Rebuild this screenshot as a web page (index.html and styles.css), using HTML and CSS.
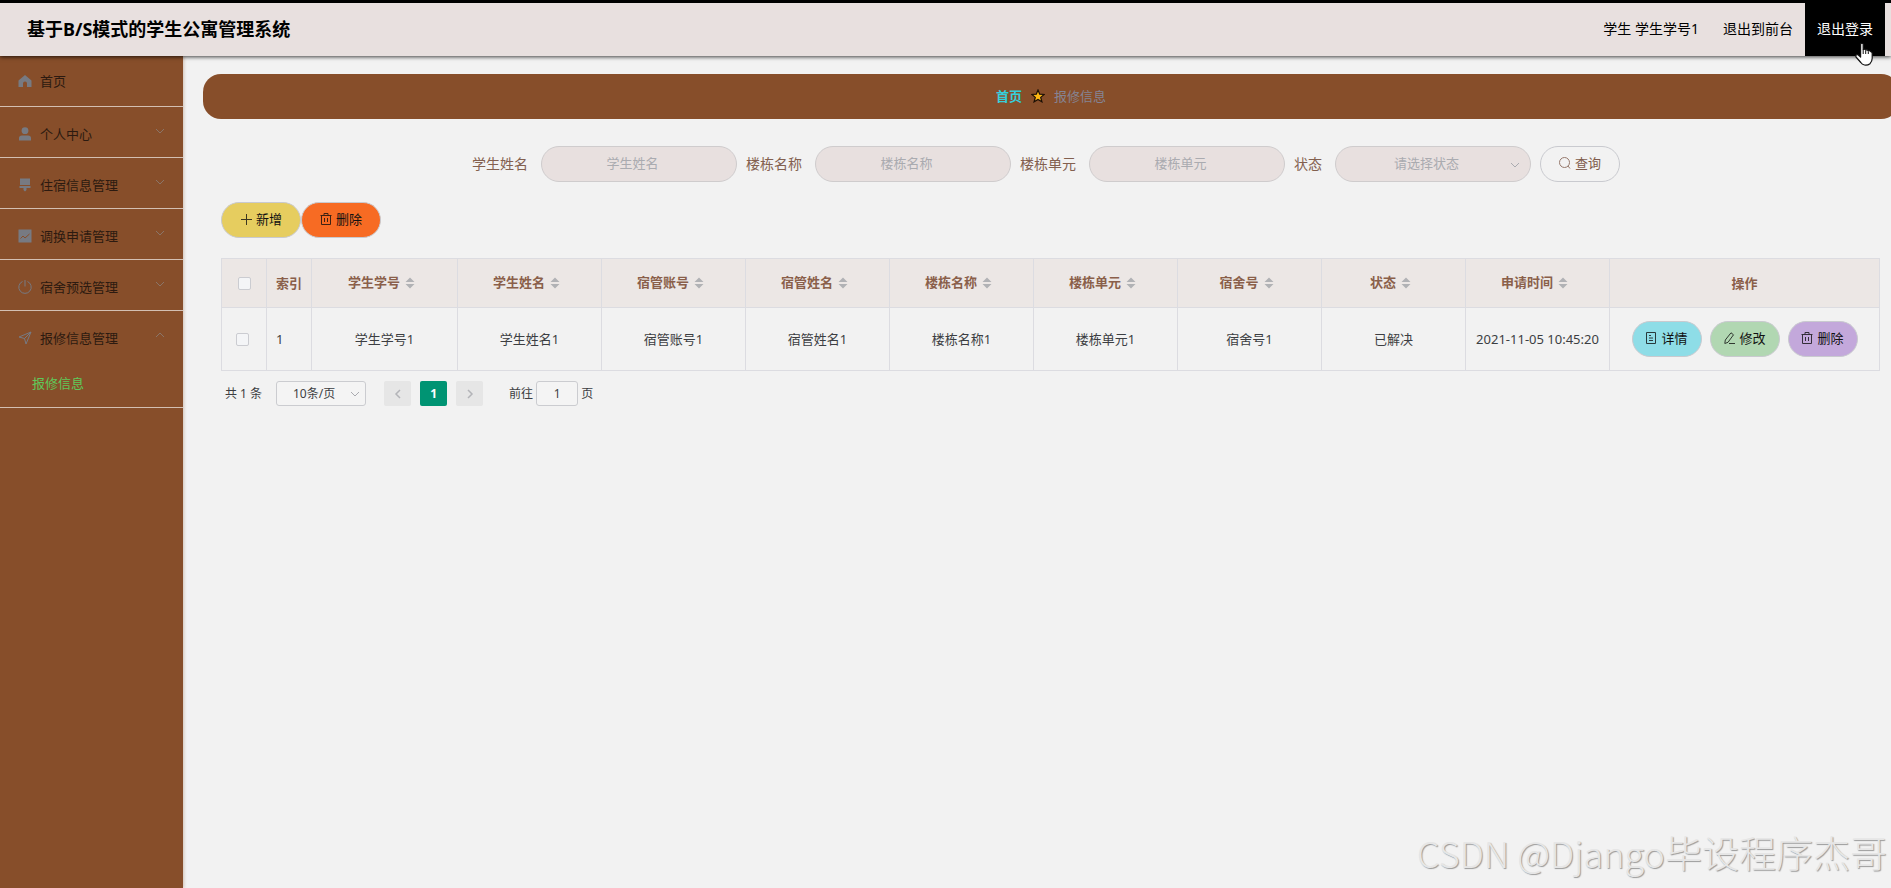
FILE: index.html
```html
<!DOCTYPE html>
<html lang="zh-CN">
<head>
<meta charset="utf-8">
<title>基于B/S模式的学生公寓管理系统</title>
<link rel="stylesheet" href="styles.css">
</head>
<body>
<svg class="sprite" aria-hidden="true">
  <symbol id="down" viewBox="0 0 10 10"><path d="M1 3l4 4 4-4" fill="none" stroke="currentColor"/></symbol>
  <symbol id="up" viewBox="0 0 10 10"><path d="M1 7l4-4 4 4" fill="none" stroke="currentColor"/></symbol>
  <symbol id="trash" viewBox="0 0 12 12"><path d="M.5 2.5h11M4 2.500V.5h4v2M1.500 2.500v9h9v-9M4.500 5v4M7.500 5v4" fill="none" stroke="currentColor"/></symbol>
  <symbol id="sort" viewBox="0 0 10 12"><path d="M5 .5l4.500 4.500h-9zM5 11.500L.5 7h9z" fill="currentColor"/></symbol>
</svg>
<header class="topbar">
  <h1 class="brand">基于B/S模式的学生公寓管理系统</h1>
  <nav class="user-nav">
    <span class="user-item">学生 学生学号1</span>
    <a class="user-item" href="#">退出到前台</a>
    <a class="user-item user-item-active" href="#">退出登录</a>
  </nav>
</header>
<div class="layout">
  <aside class="sidebar">
    <ul class="menu">
      <li class="menu-group"><a class="menu-item menu-home" href="#"><svg class="menu-icon" viewBox="0 0 14 14"><path d="M7 1L.5 6.500V13H5V9.500a2 2 0 014 0V13h4.500V6.500z" fill="currentColor"/></svg>首页</a></li>
      <li class="menu-group"><a class="menu-item" href="#"><svg class="menu-icon" viewBox="0 0 14 14"><circle cx="7" cy="3.700" r="3.400" fill="currentColor"/><path d="M1 13.500v-2.500q0-2.500 3-2.500h6q3 0 3 2.500v2.500z" fill="currentColor"/></svg>个人中心<svg class="menu-arrow"><use href="#down"/></svg></a></li>
      <li class="menu-group"><a class="menu-item" href="#"><svg class="menu-icon" viewBox="0 0 14 14"><path d="M2 .5h10V7H2zM1.500 8h11v2H8.500v2L7 13.500 5.500 12v-2h-4z" fill="currentColor"/></svg>住宿信息管理<svg class="menu-arrow"><use href="#down"/></svg></a></li>
      <li class="menu-group"><a class="menu-item" href="#"><svg class="menu-icon" viewBox="0 0 14 14"><path d="M.5.5h13v13H.5z" fill="currentColor"/><path d="M2.500 9.500L5 7l2 2 4.500-4" fill="none" stroke="#874e2a"/></svg>调换申请管理<svg class="menu-arrow"><use href="#down"/></svg></a></li>
      <li class="menu-group"><a class="menu-item" href="#"><svg class="menu-icon" viewBox="0 0 14 14"><path d="M4.500 1.500a6.200 6.200 0 105 0M7 0v6.500" fill="none" stroke="currentColor"/></svg>宿舍预选管理<svg class="menu-arrow"><use href="#down"/></svg></a></li>
      <li class="menu-group"><a class="menu-item" href="#"><svg class="menu-icon" viewBox="0 0 14 14"><path d="M13 1L1 6l5.500 1.500L8 13zM13 1L6.500 7.500" fill="none" stroke="currentColor"/></svg>报修信息管理<svg class="menu-arrow"><use href="#up"/></svg></a>
        <a class="submenu-item" href="#">报修信息</a></li>
    </ul>
  </aside>
  <main class="main">
    <nav class="breadcrumb">
      <a class="crumb-home" href="#">首页</a>
      <svg class="crumb-star" viewBox="0 0 14 14"><path d="M7 1l1.700 4.200 4.500.3-3.500 2.900 1.200 4.400L7 10.400l-3.900 2.400 1.200-4.400L.8 5.500l4.500-.3z" fill="#fdb713" stroke="#1a0e05" stroke-width="1.200"/></svg>
      <span>报修信息</span>
    </nav>
    <div class="content">
      <form class="filters">
        <label class="filter-label" for="f-name">学生姓名</label>
        <input class="filter-input" id="f-name" type="text" placeholder="学生姓名">
        <label class="filter-label" for="f-building">楼栋名称</label>
        <input class="filter-input" id="f-building" type="text" placeholder="楼栋名称">
        <label class="filter-label" for="f-unit">楼栋单元</label>
        <input class="filter-input" id="f-unit" type="text" placeholder="楼栋单元">
        <label class="filter-label" for="f-state">状态</label>
        <span class="select-wrap filter-select-wrap">
          <select class="filter-input filter-select" id="f-state"><option>请选择状态</option></select>
          <svg class="select-arrow"><use href="#down"/></svg>
        </span>
        <button class="btn btn-query" type="button"><svg class="btn-icon" viewBox="0 0 12 12"><circle cx="5.500" cy="5.500" r="5" fill="none" stroke="currentColor"/><path d="M9 9l2 2.500" stroke="currentColor"/></svg>查询</button>
      </form>
      <div class="toolbar">
        <button class="btn btn-add" type="button"><svg class="btn-icon" viewBox="0 0 12 12"><path d="M1 6.500h11M6.500 1v11" stroke="currentColor"/></svg>新增</button>
        <button class="btn btn-delete" type="button"><svg class="btn-icon"><use href="#trash"/></svg>删除</button>
      </div>
      <table class="table">
        <colgroup><col class="col-small"><col class="col-small"><col class="col-id"><col class="col-data"><col class="col-data"><col class="col-data"><col class="col-data"><col class="col-data"><col class="col-data"><col class="col-data"><col class="col-data"><col></colgroup>
        <thead>
          <tr>
            <th><input class="check" type="checkbox" aria-label="全选"></th>
            <th class="cell-index">索引</th>
            <th class="sortable">学生学号<svg class="sort"><use href="#sort"/></svg></th>
            <th class="sortable">学生姓名<svg class="sort"><use href="#sort"/></svg></th>
            <th class="sortable">宿管账号<svg class="sort"><use href="#sort"/></svg></th>
            <th class="sortable">宿管姓名<svg class="sort"><use href="#sort"/></svg></th>
            <th class="sortable">楼栋名称<svg class="sort"><use href="#sort"/></svg></th>
            <th class="sortable">楼栋单元<svg class="sort"><use href="#sort"/></svg></th>
            <th class="sortable">宿舍号<svg class="sort"><use href="#sort"/></svg></th>
            <th class="sortable">状态<svg class="sort"><use href="#sort"/></svg></th>
            <th class="sortable">申请时间<svg class="sort"><use href="#sort"/></svg></th>
            <th>操作</th>
          </tr>
        </thead>
        <tbody>
          <tr>
            <td class="cell-check"><input class="check" type="checkbox" aria-label="选择第1行"></td>
            <td class="cell-index">1</td>
            <td>学生学号1</td>
            <td>学生姓名1</td>
            <td>宿管账号1</td>
            <td>宿管姓名1</td>
            <td>楼栋名称1</td>
            <td>楼栋单元1</td>
            <td>宿舍号1</td>
            <td>已解决</td>
            <td>2021-11-05 10:45:20</td>
            <td>
              <div class="actions">
                <button class="btn btn-detail" type="button"><svg class="btn-icon" viewBox="0 0 12 12"><path d="M1.500.5h9v11h-9zM4 3.500h2M4 6h4M4 8.500h4" fill="none" stroke="currentColor"/></svg>详情</button>
                <button class="btn btn-edit" type="button"><svg class="btn-icon" viewBox="0 0 12 12"><path d="M8 .8l2.500 2-5.500 7.500-3.200 1.200.5-3.500zM6 11.500h6" fill="none" stroke="currentColor"/></svg>修改</button>
                <button class="btn btn-remove" type="button"><svg class="btn-icon"><use href="#trash"/></svg>删除</button>
              </div>
            </td>
          </tr>
        </tbody>
      </table>
      <div class="pagination">
        <span class="page-total">共 1 条</span>
        <span class="select-wrap page-size-wrap">
          <select class="page-size" aria-label="每页条数"><option>10条/页</option></select>
          <svg class="select-arrow page-size-arrow"><use href="#down"/></svg>
        </span>
        <button class="page-btn" type="button" aria-label="上一页"><svg class="page-icon" viewBox="0 0 10 10"><path d="M7 1L3 5l4 4" fill="none" stroke="currentColor" stroke-width="1.500"/></svg></button>
        <button class="page-btn page-btn-active" type="button">1</button>
        <button class="page-btn" type="button" aria-label="下一页"><svg class="page-icon" viewBox="0 0 10 10"><path d="M3 1l4 4-4 4" fill="none" stroke="currentColor" stroke-width="1.500"/></svg></button>
        <label class="page-jump">前往 <input class="page-input" type="text" value="1"> 页</label>
      </div>
    </div>
  </main>
</div>
<svg class="pointer" viewBox="0 0 18 24"><path d="M5.600 2q1.400-1.500 2.600 0v5.500q1.800-.8 2.500.6 1.800-.8 2.600.8 1.800-.6 2.500.8 1.200.2 1.400 1.600v5q0 3-2.200 5.400-2.500 1.800-5.500 1.300-2.500-.5-3.700-2.500L1 15q-.8-2.800 2-2.300L5.600 15z" fill="#fff" stroke="#111" stroke-width="1.200" stroke-linejoin="round"/><path d="M8.200 7.500v4.500M10.700 8.500v3.500M13.300 9.500V12" stroke="#111"/></svg>
<div class="watermark"><span class="watermark-latin">CSDN @Django</span>毕设程序杰哥</div>
</body>
</html>
```
FILE: styles.css
```css
* { box-sizing: border-box; }

body {
  margin: 0;
  min-height: 100vh;
  display: flex;
  flex-direction: column;
  position: relative;
  overflow: hidden;
  background: #f2f2f2;
  color: #3c3e42;
  font: 13px/20px "Noto Sans", "Noto Sans CJK SC", sans-serif;
}

a { color: inherit; text-decoration: none; }

button, input, select { font: inherit; color: inherit; margin: 0; }

.sprite { display: none; }

.topbar {
  position: relative;
  height: 56px;
  border-top: 3px solid #000;
  padding: 0 6px 0 27px;
  display: flex;
  justify-content: space-between;
  background: #e8e0df;
  box-shadow: 0 1px 4px rgba(0, 0, 0, .75);
  color: #000;
}

.brand { margin: 0; font-size: 18px; line-height: 53px; font-weight: 700; }

.user-nav { display: flex; font-size: 14px; line-height: 51px; }

.user-item { padding: 0 12px; }

.user-item-active { background: #000; color: #fff; }

.layout { flex: 1; display: flex; }

.sidebar {
  width: 183px;
  flex: none;
  background: #874e2a;
  box-shadow: 1px 0 3px rgba(135, 78, 42, .3);
  color: #2c1a10;
}

.menu { margin: 0; padding: 0; list-style: none; }

.menu-group { border-bottom: 1px solid #d3bfb2; }

.menu-item { display: flex; align-items: center; height: 50px; padding: 3px 18px 0; }

.menu-home { padding-top: 0; }

.menu-icon { width: 14px; height: 14px; margin-right: 8px; color: #777a82; }

.menu-arrow { width: 10px; height: 10px; margin: 0 0 6px auto; color: #8b7568; }

.submenu-item { display: block; padding: 0 32px 2px; line-height: 44px; color: #5fc95a; }

.main { flex: 1; min-width: 0; margin-right: -8px; padding: 18px 0 0 20px; }

.breadcrumb {
  height: 45px;
  padding-bottom: 2px;
  border-radius: 18px;
  background: #874e2a;
  display: flex;
  align-items: center;
  justify-content: center;
  gap: 9px;
  color: #858494;
}

.crumb-home { font-weight: 700; color: #35cfdc; }

.crumb-star { width: 14px; height: 14px; }

.content { padding: 27px 19px 0 18px; }

.filters { display: flex; justify-content: center; align-items: center; }

.filter-label { margin-right: 13px; font-size: 14px; color: #83604f; }

.filter-input {
  width: 196px;
  height: 36px;
  margin-right: 9px;
  padding: 0 28px 2px 15px;
  border: 1px solid #cfcccd;
  border-radius: 18px;
  background: #e8e0df;
  text-align: center;
}

.filter-input::placeholder { color: #aaabb0; opacity: 1; }

.select-wrap { position: relative; display: inline-flex; }

.filter-select-wrap { margin-right: 9px; }

.filter-select {
  appearance: none;
  margin: 0;
  text-align-last: center;
  color: #aaabb0;
}

.select-arrow {
  position: absolute;
  top: 14px;
  right: 11px;
  width: 10px;
  height: 10px;
  color: #aaabb0;
  pointer-events: none;
}

.btn {
  display: inline-flex;
  align-items: center;
  justify-content: center;
  gap: 4px;
  width: 80px;
  height: 36px;
  padding: 0 0 2px;
  border: 1px solid #c9cacf;
  border-radius: 18px;
  background: none;
  color: #111;
}

.btn-icon { width: 12px; height: 12px; opacity: .8; }

.btn-query { margin-right: 9px; color: #7f5b4b; }

.toolbar { display: flex; margin: 20px 0; }

.btn-add { background: #e6cd5f; }

.btn-delete { background: #f76b23; }

.table {
  width: 100%;
  table-layout: fixed;
  border-collapse: collapse;
  text-align: center;
}

.table th, .table td { border: 1px solid #dcdce1; padding: 0; }

.table th { height: 49px; background: #ece7e5; color: #8a5f4a; }

.table td { height: 63px; }

.table .cell-index { text-align: left; padding-left: 9px; }

.table .cell-check { padding-right: 4px; }

.table .sortable { padding: 0 6px 2px 0; }

.col-small { width: 45px; }

.col-id { width: 146px; }

.col-data { width: 144px; }

.check {
  appearance: none;
  display: block;
  width: 13px;
  height: 13px;
  margin: 0 auto;
  border: 1px solid #cbccd1;
  border-radius: 2px;
  background: #f4f5f7;
}

.sort {
  width: 10px;
  height: 12px;
  margin-left: 5px;
  vertical-align: middle;
  color: #b1b2b5;
}

.actions { display: flex; justify-content: center; gap: 8px; }

.actions .btn { width: 70px; }

.btn-detail { background: #8edde7; }

.btn-edit { background: #b1d7b2; }

.btn-remove { background: #c3a8db; }

.pagination { display: flex; align-items: center; padding: 10px 4px; font-size: 12px; }

.page-total { margin-right: 14px; }

.page-size-wrap { margin-right: 18px; }

.page-size {
  appearance: none;
  width: 90px;
  height: 25px;
  padding: 0 22px 0 8px;
  border: 1px solid #cbccd0;
  border-radius: 3px;
  background: #f4f4f4;
  text-align-last: center;
}

.page-size-arrow { top: 8px; right: 6px; }

.page-btn {
  display: flex;
  align-items: center;
  justify-content: center;
  width: 27px;
  height: 25px;
  margin-right: 9px;
  padding: 0;
  border: 0;
  border-radius: 2px;
  background: #e6e6e6;
  color: #b3b4b8;
  font-weight: 700;
}

.page-btn-active { background: #009473; color: #fff; }

.page-icon { width: 10px; height: 10px; }

.page-jump { display: flex; align-items: center; gap: 3px; margin-left: 17px; }

.page-input {
  width: 42px;
  height: 25px;
  padding: 0;
  border: 1px solid #cbccd0;
  border-radius: 3px;
  background: #f4f4f4;
  text-align: center;
}

.pointer {
  position: absolute;
  top: 42px;
  right: 18px;
  width: 18px;
  height: 24px;
}

.watermark {
  position: absolute;
  right: 4px;
  bottom: 9px;
  font: 300 37px/54px "Noto Sans CJK SC", sans-serif;
  color: #e6e6e6;
  text-shadow: 1px 1px 1px #999;
}

.watermark-latin { font-size: 36px; }
```
